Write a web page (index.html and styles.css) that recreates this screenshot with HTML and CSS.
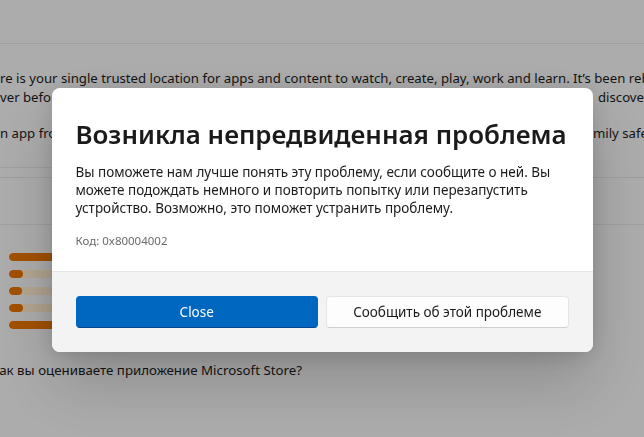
FILE: index.html
```html
<!DOCTYPE html>
<html lang="ru">
<head>
    <meta charset="UTF-8">
    <meta name="viewport" content="width=device-width, initial-scale=1.0">
    <title>Microsoft Store</title>
    <link rel="stylesheet" href="styles.css">
</head>
<body>
    <div class="store">
        <div class="topbar"></div>

        <section class="about">
            <p class="about-line">re is your single trusted location for apps and content to watch, create, play, work and learn. It’s been rebuilt from the ground up</p>
            <p class="about-line split split-discover">
                <span>ver before, with a brand new design that makes it easier to</span>
                <span>discover new apps, games and films</span>
            </p>
            <p class="about-line split split-family">
                <span>n app from the Store, it’s checked for security and</span>
                <span>family safety</span>
            </p>
        </section>

        <div class="rule rule-short"></div>
        <div class="rule rule-tabs"></div>
        <div class="rule rule-ratings"></div>

        <div class="ratings">
            <div class="bar"><span class="fill" style="width: 100%"></span></div>
            <div class="bar"><span class="fill" style="width: 14px"></span></div>
            <div class="bar"><span class="fill" style="width: 13px"></span></div>
            <div class="bar"><span class="fill" style="width: 14px"></span></div>
            <div class="bar"><span class="fill" style="width: 100%"></span></div>
        </div>

        <p class="question">Как вы оцениваете приложение Microsoft Store?</p>
    </div>

    <div class="smoke">
        <div class="dialog" role="dialog" aria-labelledby="dialogTitle">
            <div class="dialog-body">
                <h1 id="dialogTitle">Возникла непредвиденная проблема</h1>
                <p class="dialog-text">Вы поможете нам лучше понять эту проблему, если сообщите о ней. Вы<br>можете подождать немного и повторить попытку или перезапустить<br>устройство. Возможно, это поможет устранить проблему.</p>
                <p class="dialog-code">Код: 0x80004002</p>
            </div>
            <div class="dialog-footer">
                <button type="button" class="btn btn-accent">Close</button>
                <button type="button" class="btn">Сообщить об этой проблеме</button>
            </div>
        </div>
    </div>
</body>
</html>
```

FILE: styles.css
```css
body {
    margin: 0;
    font-family: "Noto Sans", "Open Sans", sans-serif;
    color: #1b1b1b;
    background: #f7f7f7;
    overflow: hidden;
}

/* store page behind the dialog */
.store {
    height: 437px;
    overflow: hidden;
    font-size: 13.2px;
    line-height: 19px;
}
.topbar {
    height: 43px;
    border-bottom: 1px solid #e4e4e4;
}
.about {
    padding-top: 25px;
}
.about-line {
    margin: 0;
    white-space: nowrap;
    overflow: hidden;
}
.split {
    display: grid;
}
.split span {
    overflow: hidden;
}
.split-discover {
    grid-template-columns: 598px auto;
}
.split-family {
    grid-template-columns: 581px auto;
    margin-top: 17px;
}
.rule {
    border-top: 1px solid #e4e4e4;
}
.rule-short {
    width: 420px;
    margin-top: 24px;
}
.rule-tabs {
    margin-top: 9px;
}
.rule-ratings {
    margin-top: 46px;
}
.ratings {
    display: grid;
    grid-template-rows: repeat(5, 8px);
    row-gap: 9px;
    width: 220px;
    margin: 28px 0 0 9px;
}
.bar {
    background: #ffedcf;
    border-radius: 4px;
    overflow: hidden;
}
.fill {
    display: block;
    height: 100%;
    background: #e97300;
    border-radius: 4px;
}
.question {
    margin: 32px 0 0 -9px;
    font-size: 13.3px;
}

/* dialog */
.smoke {
    position: fixed;
    inset: 0;
    padding-top: 2px;
    background: rgba(0, 0, 0, 0.3);
    display: flex;
    align-items: center;
    justify-content: center;
}
.dialog {
    width: 541px;
    background: #fff;
    border-radius: 8px;
    overflow: hidden;
    box-shadow: 0 32px 64px rgba(0, 0, 0, 0.19), 0 2px 21px rgba(0, 0, 0, 0.15);
}
.dialog-body {
    padding: 29px 24px 22px;
}
.dialog-body h1 {
    margin: 0;
    font-size: 25.9px;
    line-height: 34px;
    font-weight: 600;
    white-space: nowrap;
    color: #1a1a1a;
}
.dialog-text {
    margin: 12px 0 0;
    font-size: 13.5px;
    line-height: 18px;
}
.dialog-code {
    margin: 16px 0 0;
    font-size: 11.5px;
    line-height: 16px;
    color: #6b6b6b;
}
.dialog-footer {
    display: grid;
    grid-template-columns: 1fr 1fr;
    gap: 8px;
    padding: 24px;
    background: #f3f3f3;
    border-top: 1px solid #e5e5e5;
}
.btn {
    height: 32px;
    font-family: inherit;
    font-size: 13.5px;
    color: #1b1b1b;
    background: #fdfdfd;
    border: 1px solid #e5e5e5;
    border-bottom-color: #d0d0d0;
    border-radius: 4px;
    cursor: pointer;
}
.btn-accent {
    color: #fff;
    background: #0067c0;
    border-color: #0067c0;
    border-bottom-color: #00478f;
}
```
